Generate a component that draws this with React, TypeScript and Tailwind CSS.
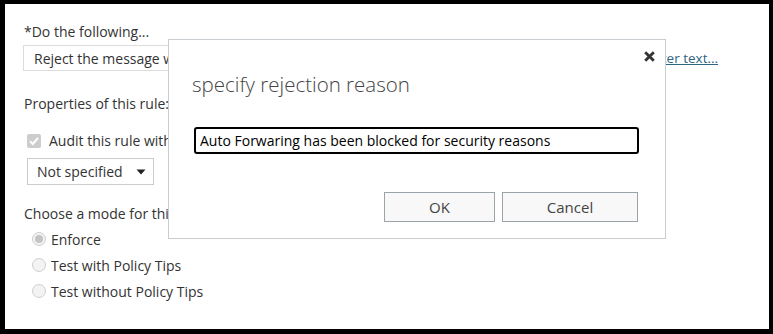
import React from "react";

function Check() {
  return (
    <svg width="14" height="14" viewBox="0 0 14 14">
      <rect x="0" y="0" width="14" height="14" rx="2" fill="#cdcdcd" />
      <path d="M3 7.2 L5.8 10 L11 3.8" stroke="#ffffff" strokeWidth="2" fill="none" />
    </svg>
  );
}

function Radio({ on }: { on?: boolean }) {
  return (
    <span className="w-[14px] h-[14px] rounded-full border border-[#cfcfcf] bg-[#f3f3f3] flex items-center justify-center shrink-0">
      {on ? <span className="w-[8px] h-[8px] rounded-full bg-[#c4c4c4]" /> : null}
    </span>
  );
}

export default function App() {
  return (
    <div className="w-[773px] h-[334px] bg-white border-black border-t-4 border-l-[5px] border-r-4 border-b-[5px] relative overflow-hidden font-['Open_Sans',sans-serif] text-[14px] text-[#333]">
      <div className="pl-[19px] pt-[18px] flex flex-col">
        <div className="leading-[19px] whitespace-nowrap">*Do the following...</div>
        <div className="mt-[4px] flex items-center h-[26px] whitespace-nowrap">
          <div className="ml-[-1px] w-[560px] h-[26px] border border-[#dcdcdc] pl-[10px] flex items-center leading-[19px]">
            Reject the message with the explanation
          </div>
          <a className="ml-[63px] text-[13.5px] text-[#2f6482] underline leading-[19px]">Enter text...</a>
        </div>
        <div className="mt-[23px] leading-[19px] whitespace-nowrap">Properties of this rule:</div>
        <div className="mt-[18px] flex items-center h-[19px] whitespace-nowrap">
          <span className="ml-[3px]"><Check /></span>
          <span className="ml-[8px] leading-[19px]">Audit this rule with severity level:</span>
        </div>
        <div className="mt-[8px] ml-[3px] w-[127px] h-[27px] border border-[#cccccc] flex items-center justify-between pl-[9px] pr-[7px] whitespace-nowrap">
          <span className="leading-[19px]">Not specified</span>
          <svg width="10" height="6" viewBox="0 0 10 6">
            <path d="M0.5 0.5 L9.5 0.5 L5 5.5 Z" fill="#222" />
          </svg>
        </div>
        <div className="mt-[19px] leading-[19px] whitespace-nowrap">Choose a mode for this rule:</div>
        <div className="mt-[3px] flex flex-col">
          <div className="h-[26px] flex items-center whitespace-nowrap">
            <span className="ml-[8px]"><Radio on /></span>
            <span className="ml-[5px]">Enforce</span>
          </div>
          <div className="h-[26px] flex items-center whitespace-nowrap">
            <span className="ml-[8px]"><Radio /></span>
            <span className="ml-[5px]">Test with Policy Tips</span>
          </div>
          <div className="h-[26px] flex items-center whitespace-nowrap">
            <span className="ml-[8px]"><Radio /></span>
            <span className="ml-[5px]">Test without Policy Tips</span>
          </div>
        </div>
      </div>

      <div className="absolute left-[163px] top-[35px] w-[498px] h-[200px] bg-white border border-[#c8cdd1] pl-[25px] pr-[26px] flex flex-col">
        <button className="absolute right-[10px] top-[11px]" aria-label="close">
          <svg width="11" height="11" viewBox="0 0 11 11">
            <path d="M1.2 1.2 L9.8 9.8 M9.8 1.2 L1.2 9.8" stroke="#333" strokeWidth="2.8" />
          </svg>
        </button>
        <div className="mt-[31px] ml-[-2px] text-[20.5px] font-light leading-[27px] text-[#444] whitespace-nowrap">
          specify rejection reason
        </div>
        <div className="mt-[29px] w-[445px] h-[27px] border-2 border-black rounded-[3px] pl-[4px] flex items-center text-[14px] text-black whitespace-nowrap leading-[19px]">
          Auto Forwaring has been blocked for security reasons
        </div>
        <div className="mt-[38px] flex justify-end gap-[7px] pr-[1px]">
          <button className="w-[111px] h-[30px] border border-[#9aa5a9] bg-[#f8f8f8] text-[15px] text-[#444] font-['Open_Sans',sans-serif]">
            OK
          </button>
          <button className="w-[136px] h-[30px] border border-[#9aa5a9] bg-[#f8f8f8] text-[15px] text-[#444] font-['Open_Sans',sans-serif]">
            Cancel
          </button>
        </div>
      </div>
    </div>
  );
}
